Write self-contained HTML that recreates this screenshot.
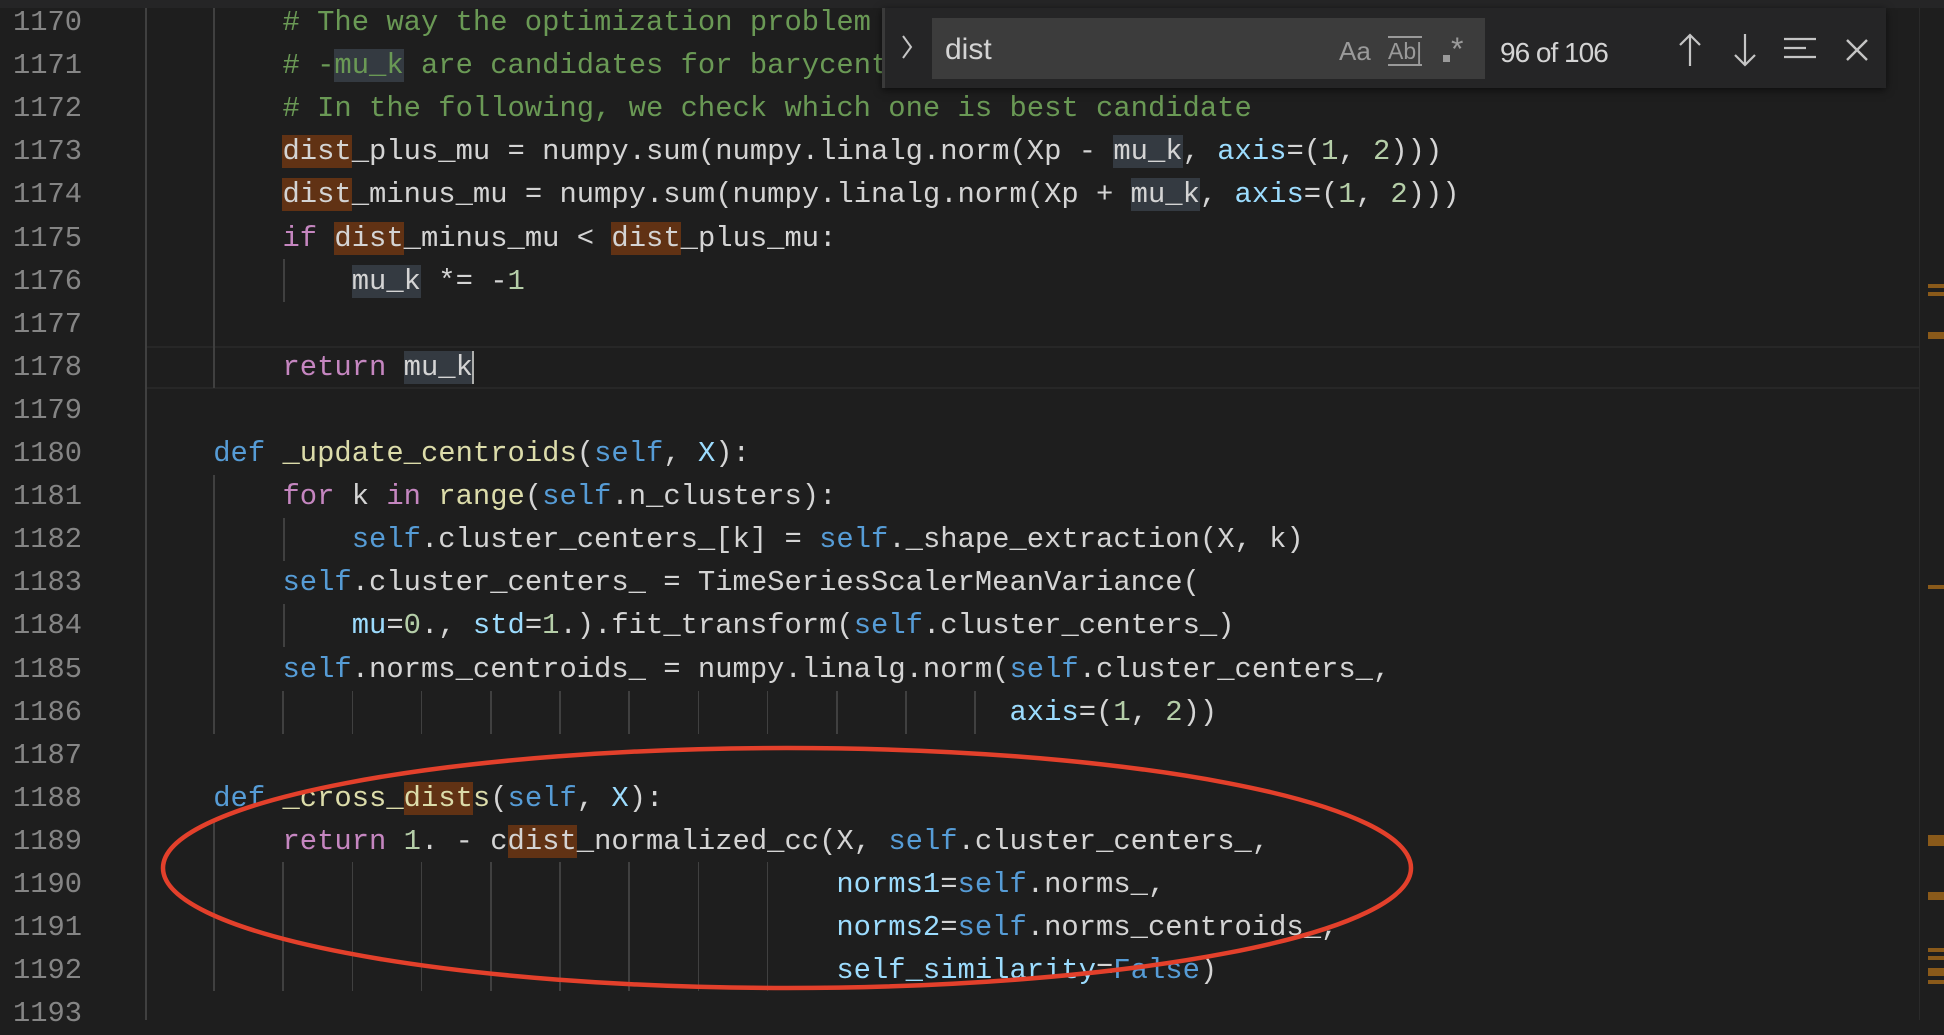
<!DOCTYPE html>
<html><head><meta charset="utf-8"><style>
*{margin:0;padding:0;box-sizing:border-box}
body{width:1944px;height:1020px;background:#1e1e1e;overflow:hidden;position:relative;font-family:"Liberation Mono",monospace;font-size:28.85px;color:#d4d4d4}
.ln{position:absolute;left:0;width:82px;text-align:right;color:#858585;height:43.1px;line-height:43.1px;font-size:28.75px}
.l{position:absolute;left:144px;white-space:pre;height:43.1px;line-height:43.1px}
.c{color:#6a9955}.k{color:#569cd6}.p{color:#c586c0}.f{color:#dcdcaa}.v{color:#9cdcfe}.n{color:#b5cea8}
.h{background:#613214}.s{background:#343a41}
.g{position:absolute;width:1.5px;background:#404040}
.m{position:absolute;left:1928px;width:16px;background:#8a5a1a}
</style></head><body>
<div style="position:absolute;left:0;top:0;width:1944px;height:8px;background:#252526"></div>
<div style="position:absolute;left:145px;top:346px;width:1775px;height:43px;border-top:2px solid #272727;border-bottom:2px solid #272727"></div>
<div class="g" style="left:145px;top:8px;height:1012px"></div>
<div class="g" style="left:213px;top:8px;height:380px"></div>
<div class="g" style="left:213px;top:475px;height:259px"></div>
<div class="g" style="left:213px;top:819px;height:172px"></div>
<div class="g" style="left:283px;top:259px;height:43px"></div>
<div class="g" style="left:283px;top:518px;height:43px"></div>
<div class="g" style="left:283px;top:604px;height:43px"></div>
<div id="g1"></div>
<script>
(function(){var h='';
for(var c=8;c<=48;c+=4){var x=144+c*17.3;h+='<div class="g" style="left:'+x+'px;top:691px;height:43px"></div>';}
for(var c=8;c<=36;c+=4){var x=144+c*17.3;h+='<div class="g" style="left:'+x+'px;top:862px;height:129px"></div>';}
document.getElementById('g1').innerHTML=h;})();
</script>
<div id="code"></div>
<script>
var L=[
'        <span class="c"># The way the optimization problem is (ill-)formulated, both mu_k and</span>',
'        <span class="c"># -<span class="s">mu_k</span> are candidates for barycenters</span>',
'        <span class="c"># In the following, we check which one is best candidate</span>',
'        <span class="h">dist</span>_plus_mu = numpy.sum(numpy.linalg.norm(Xp - <span class="s">mu_k</span>, <span class="v">axis</span>=(<span class="n">1</span>, <span class="n">2</span>)))',
'        <span class="h">dist</span>_minus_mu = numpy.sum(numpy.linalg.norm(Xp + <span class="s">mu_k</span>, <span class="v">axis</span>=(<span class="n">1</span>, <span class="n">2</span>)))',
'        <span class="p">if</span> <span class="h">dist</span>_minus_mu &lt; <span class="h">dist</span>_plus_mu:',
'            <span class="s">mu_k</span> *= -<span class="n">1</span>',
'',
'        <span class="p">return</span> <span class="s">mu_k</span><span style="border-left:2px solid #aeafad;margin-left:-1px"></span>',
'',
'    <span class="k">def</span> <span class="f">_update_centroids</span>(<span class="k">self</span>, <span class="v">X</span>):',
'        <span class="p">for</span> k <span class="p">in</span> <span class="f">range</span>(<span class="k">self</span>.n_clusters):',
'            <span class="k">self</span>.cluster_centers_[k] = <span class="k">self</span>._shape_extraction(X, k)',
'        <span class="k">self</span>.cluster_centers_ = TimeSeriesScalerMeanVariance(',
'            <span class="v">mu</span>=<span class="n">0</span>., <span class="v">std</span>=<span class="n">1</span>.).fit_transform(<span class="k">self</span>.cluster_centers_)',
'        <span class="k">self</span>.norms_centroids_ = numpy.linalg.norm(<span class="k">self</span>.cluster_centers_,',
'                                                  <span class="v">axis</span>=(<span class="n">1</span>, <span class="n">2</span>))',
'',
'    <span class="k">def</span> <span class="f">_cross_<span class="h">dist</span>s</span>(<span class="k">self</span>, <span class="v">X</span>):',
'        <span class="p">return</span> <span class="n">1</span>. - c<span class="h">dist</span>_normalized_cc(X, <span class="k">self</span>.cluster_centers_,',
'                                        <span class="v">norms1</span>=<span class="k">self</span>.norms_,',
'                                        <span class="v">norms2</span>=<span class="k">self</span>.norms_centroids_,',
'                                        <span class="v">self_similarity</span>=<span class="k">False</span>)',
''
];
var h='';
for(var i=0;i<L.length;i++){var t=(1+i*43.1).toFixed(1);
h+='<div class="ln" style="top:'+t+'px">'+(1170+i)+'</div><div class="l" style="top:'+t+'px">'+L[i]+'</div>';}
document.getElementById('code').innerHTML=h;
</script>
<div style="position:absolute;left:1919px;top:8px;width:1px;height:1012px;background:#2a2a2a"></div>
<div class="m" style="top:284px;height:4px"></div>
<div class="m" style="top:292px;height:4px"></div>
<div class="m" style="top:332px;height:7px"></div>
<div class="m" style="top:585px;height:4px"></div>
<div class="m" style="top:835px;height:11px"></div>
<div class="m" style="top:892px;height:8px"></div>
<div class="m" style="top:948px;height:4px"></div>
<div class="m" style="top:956px;height:4px"></div>
<div class="m" style="top:968px;height:8px"></div>
<div class="m" style="top:980px;height:4px"></div>
<div style="position:absolute;left:882px;top:8px;width:1004px;height:80px;background:#252526;box-shadow:0 2px 8px rgba(0,0,0,.6);border-left:3px solid #3a3a3a;font-family:'Liberation Sans',sans-serif;color:#ccc">
  <div style="position:absolute;left:14px;top:24px">
    <svg width="16" height="30" viewBox="0 0 16 30"><path d="M4 4 L12 15 L4 26" stroke="#c5c5c5" stroke-width="2" fill="none"/></svg></div>
  <div style="position:absolute;left:47px;top:10px;width:553px;height:61px;background:#3c3c3c"></div>
  <div style="position:absolute;left:60px;top:25px;font-size:30px;color:#d4d4d4">dist</div>
  <div style="position:absolute;left:454px;top:28px;font-size:26px;color:#9a9a9a">Aa</div>
  <div style="position:absolute;left:503px;top:28px;font-size:23px;color:#9a9a9a;border-top:2px solid #9a9a9a;border-bottom:2px solid #9a9a9a;line-height:26px">Ab|</div>
  <div style="position:absolute;left:558px;top:47px;width:7px;height:7px;background:#9a9a9a"></div>
  <div style="position:absolute;left:566px;top:23px;font-size:32px;color:#9a9a9a">*</div>
  <div style="position:absolute;left:615px;top:29px;font-size:28px;color:#d4d4d4;letter-spacing:-1px">96 of 106</div>
  <svg style="position:absolute;left:790px;top:22px" width="30" height="40" viewBox="0 0 30 40"><path d="M15 5 V36 M5 15 L15 5 L25 15" stroke="#c5c5c5" stroke-width="2.2" fill="none"/></svg>
  <svg style="position:absolute;left:845px;top:22px" width="30" height="40" viewBox="0 0 30 40"><path d="M15 4 V35 M5 25 L15 35 L25 25" stroke="#c5c5c5" stroke-width="2.2" fill="none"/></svg>
  <svg style="position:absolute;left:897px;top:27px" width="36" height="30" viewBox="0 0 36 30"><path d="M2 4 H34 M2 13 H24 M2 22 H34" stroke="#c5c5c5" stroke-width="2.2" fill="none"/></svg>
  <svg style="position:absolute;left:957px;top:27px" width="30" height="30" viewBox="0 0 30 30"><path d="M5 5 L25 25 M25 5 L5 25" stroke="#c5c5c5" stroke-width="2.4" fill="none"/></svg>
</div>
<svg style="position:absolute;left:0;top:0" width="1944" height="1020"><ellipse cx="787" cy="868" rx="624" ry="120" fill="none" stroke="#e3402b" stroke-width="4.5"/></svg>
</body></html>
